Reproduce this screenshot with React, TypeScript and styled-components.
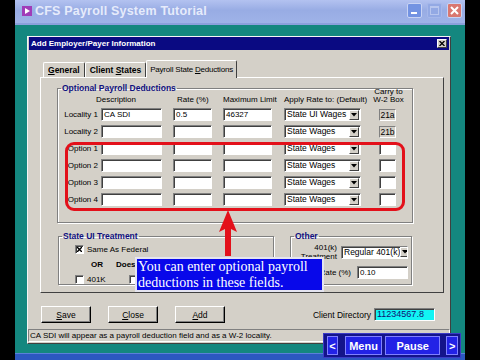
import styled, { createGlobalStyle } from "styled-components"

const GlobalStyle = createGlobalStyle`
  html, body { margin: 0; padding: 0; background: #000; }
  body { font-family: "Liberation Sans", Arial, sans-serif; font-size: 8px; color: #000; }
  * { box-sizing: border-box; }
`

const Screen = styled.div`
  position: relative;
  width: 480px;
  height: 360px;
  overflow: hidden;
  background: #000;
`

const Window = styled.div`
  margin-left: 15px;
  width: 450px;
  height: 360px;
  display: flex;
  flex-direction: column;
  background: #14877f;
`

const TitleBar = styled.div`
  height: 25px;
  display: flex;
  align-items: center;
  padding: 0 3px 2px 7px;
  background: linear-gradient(#b3c2f0, #98ace4 45%, #9fb3e8);
  border-bottom: 2px solid #8ba0dc;
`

const TitleText = styled.div`
  margin-left: 3px;
  flex: 1;
  color: #e6ebfb;
  font-size: 12.5px;
  font-weight: bold;
  letter-spacing: 0.2px;
`

const WinBtn = styled.div<{ $kind: "min" | "max" | "close" }>`
  width: 15px;
  height: 15px;
  margin-left: 5px;
  border-radius: 2px;
  display: flex;
  align-items: center;
  justify-content: center;
  background: ${(p) => (p.$kind === "close" ? "#d97770" : p.$kind === "min" ? "#7393e2" : "#93a9e4")};
  border: 1px solid ${(p) => (p.$kind === "max" ? "#a5b7ea" : "#c8d3f4")};
`

const WindowBody = styled.div`
  flex: 1;
  padding: 11px 12px 0;
  display: flex;
  flex-direction: column;
`

const Dialog = styled.div`
  width: 424px;
  background: #d4d0c8;
  border: 1px solid;
  border-color: #f4f4f4 #404040 #404040 #f4f4f4;
  display: flex;
  flex-direction: column;
`

const DialogTitle = styled.div`
  height: 13px;
  margin: 0 1px;
  background: #0a0a82;
  display: flex;
  align-items: center;
  justify-content: space-between;
  padding: 0 2px 0 2px;
  color: #fff;
  font-size: 8px;
  font-weight: bold;
`

const SmallClose = styled.div`
  width: 10px;
  height: 9px;
  background: #d4d0c8;
  border: 1px solid;
  border-color: #fff #404040 #404040 #fff;
  display: flex;
  align-items: center;
  justify-content: center;
`

const DialogBody = styled.div`
  padding: 10px 0 0 12px;
  display: flex;
  flex-direction: column;
`

const TabRow = styled.div`
  display: flex;
  align-items: flex-end;
  height: 17px;
  padding-left: 3px;
`

const Tab = styled.div<{ $active?: boolean }>`
  height: ${(p) => (p.$active ? "18px" : "15px")};
  margin-bottom: ${(p) => (p.$active ? "-1px" : "0")};
  padding: 0 ${(p) => (p.$active ? "3px" : "4px")};
  background: #d4d0c8;
  border: 1px solid;
  border-bottom: none;
  border-color: #fff #404040 #404040 #fff;
  border-radius: 2px 2px 0 0;
  display: flex;
  align-items: center;
  white-space: pre;
  font-size: ${(p) => (p.$active ? "8px" : "8.5px")};
  font-weight: ${(p) => (p.$active ? "normal" : "bold")};
  letter-spacing: ${(p) => (p.$active ? "-0.2px" : "0")};
  position: relative;
  z-index: ${(p) => (p.$active ? 1 : 0)};
`

const Panel = styled.div`
  width: 404px;
  height: 216px;
  border: 1px solid;
  border-color: #fff #404040 #404040 #fff;
  padding: 6px 0 0 16px;
  display: flex;
  flex-direction: column;
`

const Group = styled.fieldset<{ $w: number; $h: number }>`
  margin: 0;
  padding: 0;
  min-width: 0;
  width: ${(p) => p.$w}px;
  height: ${(p) => p.$h}px;
  border: 1px solid #808080;
  box-shadow: inset 1px 1px #fff, 1px 1px #fff;
`

const Legend = styled.legend`
  margin-left: 3px;
  padding: 0 1px;
  color: #101080;
  font-weight: bold;
  font-size: 8.5px;
  line-height: 9px;
`

const Grid = styled.div`
  display: grid;
  grid-template-columns: 42px 72px 50px 61px 95px 17px;
  row-gap: 4px;
  padding-left: 1px;
  margin-top: -5px;
  align-items: end;
`

const Head = styled.div<{ $shift?: number }>`
  line-height: 8px;
  margin-left: ${(p) => p.$shift ?? 0}px;
  white-space: nowrap;
`

const CarryHead = styled.div`
  line-height: 8px;
  text-align: center;
  margin: 0 -8px 0 -6px;
`

const RowLabel = styled.div`
  text-align: right;
  padding-right: 3px;
  height: 13px;
  line-height: 13px;
`

const Input = styled.div<{ $w: number; $bg?: string }>`
  width: ${(p) => p.$w}px;
  height: 13px;
  background: ${(p) => p.$bg ?? "#fff"};
  border: 1px solid;
  border-color: #808080 #fff #fff #808080;
  box-shadow: inset 1px 1px #404040;
  padding: 0 2px;
  line-height: 11px;
  white-space: nowrap;
  overflow: hidden;
`

const SelectBox = styled(Input)`
  display: flex;
  justify-content: space-between;
  padding-right: 1px;
  font-size: 8.5px;
`

const DropBtn = styled.span`
  width: 10px;
  height: 10px;
  margin-top: 0.5px;
  background: #d4d0c8;
  border: 1px solid;
  border-color: #fff #404040 #404040 #fff;
  display: flex;
  align-items: center;
  justify-content: center;
  flex-shrink: 0;
`

const BoxLabel = styled.div`
  width: 17px;
  height: 12px;
  border: 1px solid;
  border-color: #808080 #fff #fff #808080;
  text-align: center;
  line-height: 10px;
  font-size: 8.5px;
`

const LowerRow = styled.div`
  display: flex;
  margin-top: 9px;
  margin-left: 1px;
`

const CheckRow = styled.div<{ $indent?: number }>`
  display: flex;
  align-items: center;
  gap: 3px;
  height: 10px;
  padding-left: ${(p) => p.$indent ?? 0}px;
`

const Check = styled.span<{ $space?: number }>`
  width: 9px;
  height: 9px;
  margin-left: ${(p) => p.$space ?? 0}px;
  background: #fff;
  border: 1px solid;
  border-color: #808080 #fff #fff #808080;
  box-shadow: inset 1px 1px #404040;
  display: inline-flex;
  align-items: center;
  justify-content: center;
  flex-shrink: 0;
`

const StateUIBody = styled.div`
  display: flex;
  flex-direction: column;
  gap: 5px;
  padding: 3px 0 0 16px;
`

const Bold = styled.span`
  font-weight: bold;
`

const OtherGrid = styled.div`
  display: grid;
  grid-template-columns: 46px 67px;
  column-gap: 4px;
  row-gap: 5px;
  align-items: center;
  padding-top: 2px;
`

const RightLabel = styled.div<{ $pull?: number }>`
  text-align: right;
  line-height: 9px;
  margin-right: ${(p) => p.$pull ?? 0}px;
`

const ButtonRow = styled.div`
  display: flex;
  align-items: center;
  margin-top: 13px;
  padding-left: 1px;
  padding-right: 15px;
`

const Button = styled.div`
  width: 50px;
  height: 17px;
  margin-right: 17px;
  border: 1px solid;
  border-color: #fff #000 #000 #fff;
  box-shadow: inset -1px -1px #808080;
  display: flex;
  align-items: center;
  justify-content: center;
  font-size: 8.5px;
`

const Spacer = styled.div`
  flex: 1;
`

const DirLabel = styled.div`
  margin-right: 3px;
  font-size: 8.5px;
`

const StatusBar = styled.div`
  margin: 6px 0 1px -12px;
  height: 13px;
  border: 1px solid;
  border-color: #808080 #fff #fff #808080;
  padding-left: 1px;
  line-height: 11px;
  font-size: 8px;
`

const BottomStrip = styled.div`
  margin: auto -12px 0;
  height: 7px;
  background: #2c58c0;
  border-top: 1px solid #5a80d8;
`

const Highlight = styled.div`
  position: absolute;
  left: 65px;
  top: 142px;
  width: 340px;
  height: 69px;
  border: 3px solid #e3101a;
  border-radius: 9px;
`

const Arrow = styled.svg`
  position: absolute;
  left: 218px;
  top: 208px;
`

const Callout = styled.div`
  position: absolute;
  left: 135px;
  top: 257px;
  width: 189px;
  height: 35px;
  background: #0808ea;
  border: 2px solid #e4e4f0;
  color: #fff;
  font-family: "Liberation Serif", "Times New Roman", serif;
  font-size: 14px;
  line-height: 16px;
  padding: 0 0 0 1px;
  white-space: nowrap;
`

const NavBar = styled.div`
  position: absolute;
  left: 323px;
  top: 333px;
  width: 138px;
  height: 25px;
  background: #14148a;
  border: 1px solid #3a3ac8;
  display: flex;
  align-items: center;
  padding: 0 2px 0 3px;
  gap: 3px;
`

const NavBtn = styled.div<{ $w: number; $gap?: number }>`
  width: ${(p) => p.$w}px;
  height: 19px;
  margin-left: ${(p) => p.$gap ?? 0}px;
  background: #2222e6;
  border: 1px solid #8080ff;
  color: #fff;
  font-weight: bold;
  font-size: 11px;
  display: flex;
  align-items: center;
  justify-content: center;
`

const Tri = () => (
  <svg width="6" height="4" viewBox="0 0 6 4">
    <path d="M0 0H6L3 3.5Z" fill="#000" />
  </svg>
)

const Select: React.FC<{ w: number; value: string }> = ({ w, value }) => (
  <SelectBox $w={w}>
    <span>{value}</span>
    <DropBtn>
      <Tri />
    </DropBtn>
  </SelectBox>
)

type Row = { label: string; desc: string; rate: string; max: string; apply: string; box?: string }

const rows: Row[] = [
  { label: "Locality 1", desc: "CA SDI", rate: "0.5", max: "46327", apply: "State UI Wages", box: "21a" },
  { label: "Locality 2", desc: "", rate: "", max: "", apply: "State Wages", box: "21b" },
  { label: "Option 1", desc: "", rate: "", max: "", apply: "State Wages" },
  { label: "Option 2", desc: "", rate: "", max: "", apply: "State Wages" },
  { label: "Option 3", desc: "", rate: "", max: "", apply: "State Wages" },
  { label: "Option 4", desc: "", rate: "", max: "", apply: "State Wages" },
]

const U: React.FC<{ children: string }> = ({ children }) => <u>{children}</u>

export default function App() {
  return (
    <Screen>
      <GlobalStyle />
      <Window>
        <TitleBar>
          <svg width="10" height="10" viewBox="0 0 10 10">
            <rect width="10" height="10" fill="#a03cb8" />
            <path d="M3 2L8 5L3 8Z" fill="#fff" />
          </svg>
          <TitleText>CFS Payroll System Tutorial</TitleText>
          <WinBtn $kind="min">
            <svg width="7" height="7" viewBox="0 0 7 7">
              <rect x="0" y="5" width="6" height="2" fill="#fff" />
            </svg>
          </WinBtn>
          <WinBtn $kind="max">
            <svg width="9" height="9" viewBox="0 0 9 9">
              <rect x="0.5" y="0.5" width="8" height="8" fill="none" stroke="#b8c6ee" strokeWidth="1" />
              <rect x="0" y="0" width="9" height="2" fill="#b8c6ee" />
            </svg>
          </WinBtn>
          <WinBtn $kind="close">
            <svg width="9" height="9" viewBox="0 0 9 9">
              <path d="M1 1L8 8M8 1L1 8" stroke="#fff" strokeWidth="2" />
            </svg>
          </WinBtn>
        </TitleBar>
        <WindowBody>
          <Dialog>
            <DialogTitle>
              <span>Add Employer/Payer Information</span>
              <SmallClose>
                <svg width="6" height="5" viewBox="0 0 6 5">
                  <path d="M0.5 0L5.5 5M5.5 0L0.5 5" stroke="#000" strokeWidth="1.3" />
                </svg>
              </SmallClose>
            </DialogTitle>
            <DialogBody>
              <TabRow>
                <Tab>
                  <U>G</U>eneral
                </Tab>
                <Tab>
                  {"Client "}
                  <U>S</U>tates
                </Tab>
                <Tab $active>
                  {"Payroll State "}
                  <U>D</U>eductions
                </Tab>
              </TabRow>
              <Panel>
                <Group $w={356} $h={139}>
                  <Legend>Optional Payroll Deductions</Legend>
                  <Grid>
                    <div />
                    <Head $shift={-5}>Description</Head>
                    <Head $shift={4}>Rate (%)</Head>
                    <Head>Maximum Limit</Head>
                    <Head>Apply Rate to: (Default)</Head>
                    <CarryHead>
                      Carry to
                      <br />
                      W-2 Box
                    </CarryHead>
                    {rows.map((r) => (
                      <>
                        <RowLabel key={r.label + "l"}>{r.label}</RowLabel>
                        <Input $w={61}>{r.desc}</Input>
                        <Input $w={39}>{r.rate}</Input>
                        <Input $w={49}>{r.max}</Input>
                        <Select w={77} value={r.apply} />
                        {r.box ? <BoxLabel>{r.box}</BoxLabel> : <Input $w={17} />}
                      </>
                    ))}
                  </Grid>
                </Group>
                <LowerRow>
                  <Group $w={216} $h={53}>
                    <Legend>State UI Treatment</Legend>
                    <StateUIBody>
                      <CheckRow>
                        <Check>
                          <svg width="5" height="5" viewBox="0 0 5 5">
                            <path d="M0 0L5 5M5 0L0 5" stroke="#000" strokeWidth="1.4" />
                          </svg>
                        </Check>
                        Same As Federal
                      </CheckRow>
                      <CheckRow $indent={16} style={{ gap: 13 }}>
                        <Bold>OR</Bold>
                        <Bold>Does Not Apply</Bold>
                      </CheckRow>
                      <CheckRow>
                        <Check />
                        401K
                        <Check $space={20} />
                        Section 125
                      </CheckRow>
                    </StateUIBody>
                  </Group>
                  <Group $w={122} $h={53} style={{ marginLeft: 16 }}>
                    <Legend>Other</Legend>
                    <OtherGrid>
                      <RightLabel>
                        401(k)
                        <br />
                        Treatment
                      </RightLabel>
                      <Select w={67} value="Regular 401(k)" />
                      <RightLabel $pull={-14}>Rate (%)</RightLabel>
                      <Input $w={51} style={{ marginLeft: 16 }}>
                        0.10
                      </Input>
                    </OtherGrid>
                  </Group>
                </LowerRow>
              </Panel>
              <ButtonRow>
                <Button>
                  <U>S</U>ave
                </Button>
                <Button>
                  <U>C</U>lose
                </Button>
                <Button>
                  <U>A</U>dd
                </Button>
                <Spacer />
                <DirLabel>Client Directory</DirLabel>
                <Input $w={61} $bg="#12f4f4" style={{ color: "#101070", fontSize: 9 }}>
                  11234567.8
                </Input>
              </ButtonRow>
              <StatusBar>CA SDI will appear as a payroll deduction field and as a W-2 locality.</StatusBar>
            </DialogBody>
          </Dialog>
          <BottomStrip />
        </WindowBody>
      </Window>

      <Highlight />
      <Arrow width="20" height="50" viewBox="0 0 20 50">
        <path d="M10 2L19 24L13 21V48H7V21L1 24Z" fill="#e3101a" />
      </Arrow>
      <Callout>
        You can enter optional payroll
        <br />
        deductions in these fields.
      </Callout>
      <NavBar>
        <NavBtn $w={11}>&lt;</NavBtn>
        <NavBtn $w={38} $gap={4}>
          Menu
        </NavBtn>
        <NavBtn $w={56}>Pause</NavBtn>
        <NavBtn $w={12} $gap={3}>
          &gt;
        </NavBtn>
      </NavBar>
    </Screen>
  )
}
